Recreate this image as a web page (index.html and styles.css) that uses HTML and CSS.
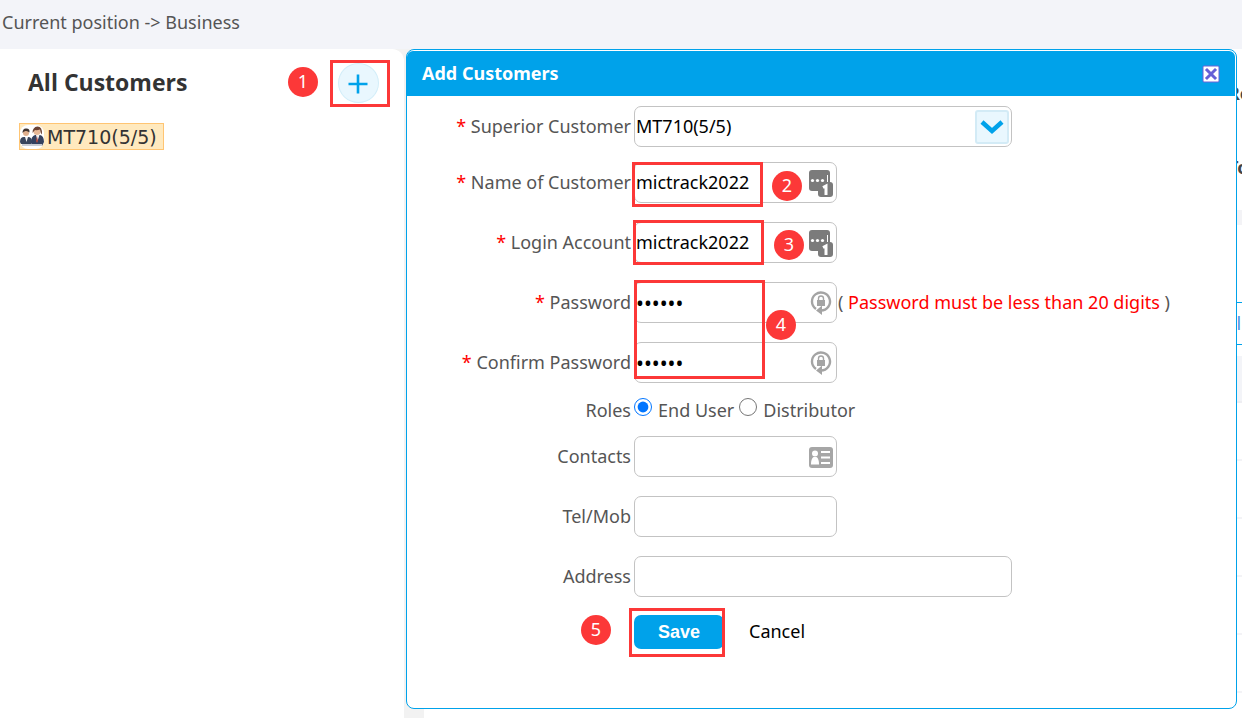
FILE: index.html
```html
<!DOCTYPE html>
<html lang="en">

<head>
    <meta charset="UTF-8">
    <meta name="viewport" content="width=device-width, initial-scale=1.0">
    <title>Business</title>
    <link rel="stylesheet" href="styles.css">
</head>

<body>
    <header class="position-bar">Current position -&gt; Business</header>

    <div class="page">
        <aside class="sidebar">
            <div class="sidebar-head">
                <h2>All Customers</h2>
                <div class="add-wrap">
                    <button type="button" class="add-btn" aria-label="Add customer">
                        <svg width="21" height="21" viewBox="0 0 21 21"><path d="M10 1.500v19M0.500 11h19" stroke="#00a2ea" stroke-width="2.600"/></svg>
                    </button>
                    <span class="mark mark-add"></span>
                    <span class="step step-1">1</span>
                </div>
            </div>
            <a class="tree-item" href="#">
                <svg width="24" height="24" viewBox="0 0 24 24">
                    <rect width="24" height="24" rx="8" fill="#fff"/>
                    <path d="M0 17q0-5 4-5h4q4 0 4 5l-1 2H1z" fill="#39465c"/>
                    <path d="M11 18q0-7 4-8h5q4 1 4 7l-2 4h-9z" fill="#34415e"/>
                    <path d="M5 12l1.500 5 1.500-5zM16 10l1.500 6 2-6z" fill="#f4f4f4"/>
                    <path d="M17 11l1 5-1 2-1-2z" fill="#b5483c"/>
                    <circle cx="6" cy="8" r="3" fill="#dfb08e"/>
                    <path d="M2.500 8q0-5 4-4.500 3.500 0 3 4-2-2-4-1.500t-3 2z" fill="#40342f"/>
                    <circle cx="17" cy="6.500" r="3.500" fill="#e6b896"/>
                    <path d="M12.500 8q0-6 5-6.500 5 0 4.500 8-1.500-1-2-5-3 1-5 .5-1 1-2.500 3z" fill="#6b4335"/>
                    <path d="M2 20h20" stroke="#c9ccd2" stroke-width="2"/>
                </svg>
                <span>MT710(5/5)</span>
            </a>
        </aside>

        <main class="detail">
            <div class="detail-head">
                <b>Re</b>
                <b>To</b>
            </div>
            <div class="detail-tools">
                <div class="tab"><span>All</span></div>
            </div>
            <div class="list">
                <div class="list-row list-title"></div>
                <div class="list-row"></div>
                <div class="list-row"></div>
                <div class="list-row"></div>
                <div class="list-row"></div>
                <div class="list-row"></div>
            </div>
        </main>
    </div>

    <section class="dialog" role="dialog" aria-labelledby="dialog-title">
        <div class="dialog-head">
            <h1 id="dialog-title">Add Customers</h1>
            <button type="button" class="close-btn" aria-label="Close">
                <svg width="18" height="18" viewBox="0 0 18 18">
                    <rect x="1" y="1" width="16" height="16" rx="1" fill="#fff" stroke="#6b63d8" stroke-width="1"/>
                    <path d="M5 5l8 8M13 5l-8 8" stroke="#6660d6" stroke-width="3" stroke-linecap="square"/>
                </svg>
            </button>
        </div>

        <form class="form" onsubmit="return false">
            <div class="row row-tight">
                <label for="superior"><i>*</i> Superior Customer</label>
                <div class="field field-wide">
                    <select id="superior">
                        <option>MT710(5/5)</option>
                    </select>
                    <svg class="arrow" width="34" height="34" viewBox="0 0 34 34">
                        <rect x="1" y="1" width="32" height="32" rx="2" fill="#e9f7fe" stroke="#d3ebf6" stroke-width="2"/>
                        <path d="M7 12l10 9 10-9" fill="none" stroke="#00a2ea" stroke-width="4.500"/>
                    </svg>
                </div>
            </div>

            <div class="row">
                <label for="customer"><i>*</i> Name of Customer</label>
                <div class="field">
                    <input type="text" id="customer" value="mictrack2022">
                    <svg class="hint-icon" width="24" height="28" viewBox="0 0 24 28">
                        <rect width="21" height="21" rx="3" fill="#7b7b7b"/>
                        <circle cx="3.500" cy="10.500" r="1.600" fill="#fff"/>
                        <circle cx="8.500" cy="10.500" r="1.600" fill="#fff"/>
                        <circle cx="13.500" cy="10.500" r="1.600" fill="#fff"/>
                        <path d="M18.500 5v7" stroke="#fff"/>
                        <rect x="9" y="12" width="15" height="15" rx="3" fill="#7b7b7b"/>
                        <path d="M14 17.500l3-1.500v9" fill="none" stroke="#fff" stroke-width="3"/>
                    </svg>
                    <span class="mark mark-name"></span>
                    <span class="step step-2">2</span>
                </div>
            </div>

            <div class="row">
                <label for="account"><i>*</i> Login Account</label>
                <div class="field">
                    <input type="text" id="account" value="mictrack2022">
                    <svg class="hint-icon" width="24" height="28" viewBox="0 0 24 28">
                        <rect width="21" height="21" rx="3" fill="#7b7b7b"/>
                        <circle cx="3.500" cy="10.500" r="1.600" fill="#fff"/>
                        <circle cx="8.500" cy="10.500" r="1.600" fill="#fff"/>
                        <circle cx="13.500" cy="10.500" r="1.600" fill="#fff"/>
                        <path d="M18.500 5v7" stroke="#fff"/>
                        <rect x="9" y="12" width="15" height="15" rx="3" fill="#7b7b7b"/>
                        <path d="M14 17.500l3-1.500v9" fill="none" stroke="#fff" stroke-width="3"/>
                    </svg>
                    <span class="mark mark-account"></span>
                    <span class="step step-3">3</span>
                </div>
            </div>

            <div class="row">
                <label for="password"><i>*</i> Password</label>
                <div class="field">
                    <input type="password" id="password" value="123456">
                    <svg class="hint-icon" width="24" height="28" viewBox="0 0 24 28">
                        <path d="M7 19A9 9 0 1 1 12 20.500" fill="none" stroke="#a4a4a4" stroke-width="2.400"/>
                        <path d="M13 15.500v9.500l-6-4.500z" fill="#a4a4a4"/>
                        <rect x="8" y="10" width="8" height="6" fill="#a4a4a4"/>
                        <path d="M9.500 10.500V8.500a2.500 2.500 0 0 1 5 0v2" fill="none" stroke="#a4a4a4" stroke-width="1.400"/>
                    </svg>
                    <span class="mark mark-password"></span>
                    <span class="step step-4">4</span>
                </div>
                <span class="note">( <em>Password must be less than 20 digits</em> )</span>
            </div>

            <div class="row row-tight">
                <label for="confirm"><i>*</i> Confirm Password</label>
                <div class="field">
                    <input type="password" id="confirm" value="123456">
                    <svg class="hint-icon" width="24" height="28" viewBox="0 0 24 28">
                        <path d="M7 19A9 9 0 1 1 12 20.500" fill="none" stroke="#a4a4a4" stroke-width="2.400"/>
                        <path d="M13 15.500v9.500l-6-4.500z" fill="#a4a4a4"/>
                        <rect x="8" y="10" width="8" height="6" fill="#a4a4a4"/>
                        <path d="M9.500 10.500V8.500a2.500 2.500 0 0 1 5 0v2" fill="none" stroke="#a4a4a4" stroke-width="1.400"/>
                    </svg>
                </div>
            </div>

            <div class="row row-tight roles">
                <span class="label">Roles</span>
                <input type="radio" id="end-user" name="role" checked>
                <label for="end-user">End User</label>
                <input type="radio" id="distributor" name="role">
                <label for="distributor">Distributor</label>
            </div>

            <div class="row">
                <label for="contacts">Contacts</label>
                <div class="field">
                    <input type="text" id="contacts">
                    <svg class="hint-icon" width="24" height="28" viewBox="0 0 24 28">
                        <rect y="3" width="24" height="21" rx="3" fill="#a6a6a6"/>
                        <circle cx="6" cy="9.500" r="3" fill="#fff"/>
                        <path d="M2 20.500q0-6 2.500-7.500h3q2.500 1.500 2.500 7.500z" fill="#fff"/>
                        <path d="M12 8h9M12 13.500h9M12 19h9" stroke="#fff" stroke-width="2"/>
                    </svg>
                </div>
            </div>

            <div class="row">
                <label for="tel">Tel/Mob</label>
                <div class="field">
                    <input type="text" id="tel">
                </div>
            </div>

            <div class="row">
                <label for="address">Address</label>
                <div class="field field-wide">
                    <input type="text" id="address">
                </div>
            </div>

            <div class="actions">
                <button type="submit" class="save-btn">Save</button>
                <button type="button" class="cancel-btn">Cancel</button>
                <span class="mark mark-save"></span>
                <span class="step step-5">5</span>
            </div>
        </form>
    </section>
</body>

</html>
```
FILE: styles.css
```css
* {
    box-sizing: border-box;
}

body {
    font-family: "Noto Sans", "Open Sans", sans-serif;
    font-size: 18px;
    line-height: 24px;
    color: #555;
    margin: 0;
    background-color: #f3f4f9;
    display: flex;
    flex-direction: column;
    min-height: 100vh;
    position: relative;
    overflow-x: hidden;
}

h1,
h2 {
    margin: 0;
}

button {
    font-family: inherit;
    padding: 0;
    border: none;
    cursor: pointer;
}

.position-bar {
    height: 49px;
    padding: 10px 2px;
}

.page {
    flex: 1;
    display: flex;
    gap: 20px;
    background-color: #f2f2f2;
}

/* left column */
.sidebar {
    width: 404px;
    flex-shrink: 0;
    background-color: #fff;
    border-top-right-radius: 12px;
}

.sidebar-head {
    display: flex;
    justify-content: space-between;
    align-items: center;
    padding: 14px 25px 0 28px;
}

.sidebar-head h2 {
    padding-bottom: 2px;
    font-family: "Open Sans", sans-serif;
    font-size: 23px;
    color: #333;
}

.add-wrap {
    position: relative;
}

.add-btn {
    display: flex;
    justify-content: center;
    align-items: center;
    width: 41px;
    height: 40px;
    border: 1px solid #d3eef9;
    border-radius: 50%;
    background-color: #e9f7fe;
}

.tree-item {
    display: inline-flex;
    align-items: center;
    gap: 3px;
    height: 27px;
    margin: 20px 19px;
    padding-right: 6px;
    border: 1px solid #ffc573;
    background-color: #ffe9be;
    color: #333;
    font-family: "DejaVu Sans", sans-serif;
    font-size: 19px;
    text-decoration: none;
}

/* customer detail, mostly under the dialog */
.detail {
    flex: 1;
    min-width: 0;
    background-color: #fff;
}

.detail-head {
    display: flex;
    flex-direction: column;
    align-items: flex-end;
    gap: 50px;
    height: 161px;
    padding-top: 32px;
    color: #444;
    overflow: hidden;
}

.detail-head b {
    width: 14px;
}

.detail-tools {
    height: 146px;
    padding-top: 77px;
    border-top: 15px solid #f3f3f6;
}

.tab {
    height: 43px;
    border: 1px solid #00a2ea;
    border-width: 1px 0;
    color: #4a90e2;
    line-height: 41px;
    overflow: hidden;
}

.tab span {
    display: block;
    width: 17px;
    margin-left: auto;
}

.list-row {
    height: 58px;
    border-bottom: 2px solid #f3f3f6;
}

.list-title {
    height: 47px;
    background-color: #f3f4f8;
    border-color: #eeeef2;
}

/* dialog */
.dialog {
    position: absolute;
    top: 49px;
    left: 406px;
    right: 5px;
    min-height: 660px;
    padding: 1px 1px 0 0;
    background-color: #fff;
    border: 1px solid #00a2ea;
    border-radius: 8px;
}

.dialog-head {
    display: flex;
    justify-content: space-between;
    align-items: center;
    height: 45px;
    padding: 0 15px;
    background-color: #00a2ea;
    border-radius: 6px 6px 0 0;
}

.dialog-head h1 {
    padding-bottom: 2px;
    font-size: 18px;
    color: #fff;
}

.close-btn {
    display: flex;
    background: none;
}

.form {
    padding-top: 10px;
}

.row {
    display: flex;
    align-items: center;
    margin-bottom: 19px;
}

.row-tight {
    margin-bottom: 15px;
}

.row > label,
.note {
    padding-bottom: 2px;
}

.row > label:first-child,
.row .label {
    width: 224px;
    margin-right: 3px;
    text-align: right;
}

.row i {
    color: #f00;
    font-style: normal;
}

.field {
    position: relative;
    width: 203px;
}

.field-wide {
    width: 378px;
}

.field input,
.field select {
    display: block;
    width: 100%;
    height: 41px;
    padding: 0 1px 2px;
    border: 1px solid #c3c3c3;
    border-radius: 7px;
    background-color: #fff;
    color: #000;
    font-family: inherit;
    font-size: 18px;
    appearance: none;
}

.field input[type="password"] {
    padding-bottom: 0;
    font-size: 21px;
}

.arrow,
.hint-icon {
    position: absolute;
    top: 8px;
    right: 4px;
    pointer-events: none;
}

.arrow {
    top: 4px;
    right: 3px;
}

.note {
    margin-left: 1px;
}

.note em {
    color: #f00;
    font-style: normal;
}

.roles {
    height: 23px;
}

.roles > label {
    margin-right: 5px;
    padding-bottom: 0;
}

.roles input {
    width: 18px;
    height: 18px;
    margin: 0 6px 5px 0;
}

.actions {
    position: relative;
    display: flex;
    align-items: center;
    gap: 25px;
    margin: -1px 0 0 227px;
}

.save-btn {
    width: 90px;
    height: 34px;
    border-radius: 7px;
    background-color: #00a2ea;
    color: #fff;
    font-family: "Liberation Sans", Arial, sans-serif;
    font-size: 18px;
    font-weight: bold;
}

.cancel-btn {
    padding-bottom: 2px;
    background: none;
    color: #000;
    font-size: 18px;
}

/* numbered walkthrough marks */
.mark,
.step {
    position: absolute;
    pointer-events: none;
}

.mark {
    width: 131px;
    height: 45px;
    border: 3px solid #fc3838;
}

.mark-add {
    top: -3px;
    left: -8px;
    width: 60px;
    height: 47px;
}

.mark-name {
    top: 0;
    left: -2px;
}

.mark-account {
    top: -2px;
    left: -1px;
}

.mark-password {
    top: -2px;
    left: 0;
    height: 99px;
    z-index: 1;
}

.mark-save {
    top: -7px;
    left: -5px;
    width: 96px;
    height: 49px;
}

.step {
    width: 30px;
    height: 30px;
    border-radius: 50%;
    background-color: #fc3838;
    color: #fff;
    line-height: 28px;
    text-align: center;
    z-index: 1;
}

.step-1 {
    top: 4px;
    left: -50px;
}

.step-2 {
    top: 9px;
    left: 138px;
}

.step-3 {
    top: 8px;
    left: 140px;
}

.step-4 {
    top: 28px;
    left: 132px;
}

.step-5 {
    top: 0;
    left: -53px;
}
```
